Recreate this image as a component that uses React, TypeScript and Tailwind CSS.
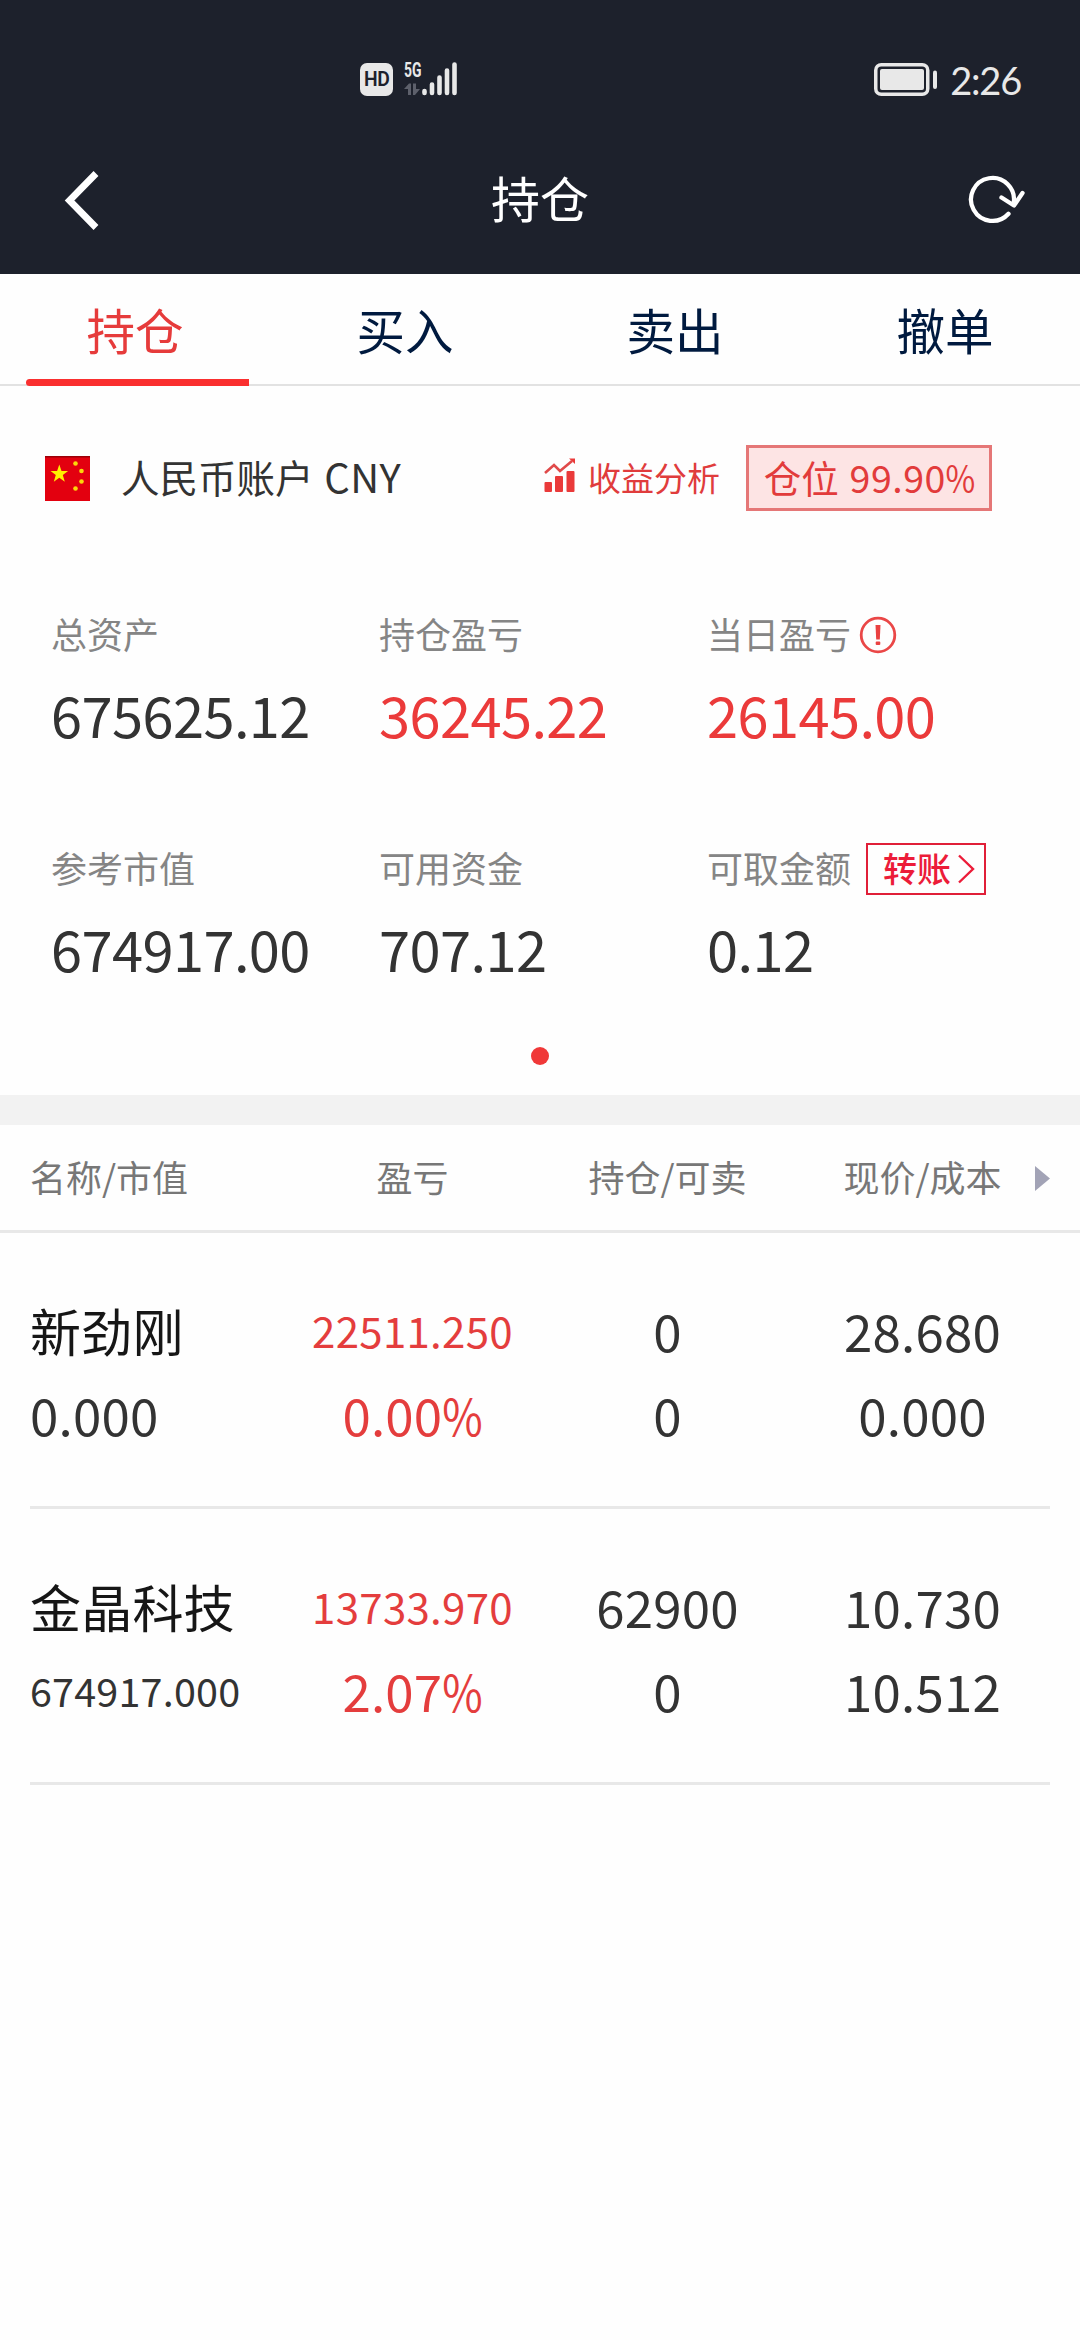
import React from "react";

const rows = [
  { name: "新劲刚", value: "0.000", small: false, pl: "22511.250", pct: "0.00", hold: "0", avail: "0", price: "28.680", cost: "0.000" },
  { name: "金晶科技", value: "674917.000", small: true, pl: "13733.970", pct: "2.07", hold: "62900", avail: "0", price: "10.730", cost: "10.512" },
];

function StatusBar() {
  return (
    <div className="flex h-[126px] items-start pt-[62px] pl-[360px] pr-[59px] text-[#e8e8e8]">
      <div className="mt-[1px] flex h-[33px] w-[33px] items-center justify-center rounded-[7px] bg-[#e8e8e8] font-['Roboto',sans-serif] text-[21px] font-semibold leading-none text-[#1d212c] tracking-[-0.5px]">
        <span className="inline-block scale-x-[0.92]">HD</span>
      </div>
      <svg className="-mt-[10px] ml-[11px] h-[44px] w-[55px]" viewBox="0 -10 55 44">
        <text x="0" y="15" fontFamily="Roboto" fontWeight="700" fontSize="20" textLength="17.500" lengthAdjust="spacingAndGlyphs" fill="#e8e8e8">5G</text>
        <path d="M0 27l5-5.500h2V33H4v-6zM9 21.500h3v5.500h4l-5 6H9z" fill="#5d606b" />
        <g stroke="#e8e8e8" strokeWidth="4.600" strokeLinecap="round">
          <path d="M20.500 29v2M28 22.500v8.500M35.500 15.500V31M43 8.500V31M50.500 2.500V31" />
        </g>
      </svg>
      <svg className="ml-auto mt-[1px] h-[33px] w-[64px]" viewBox="0 0 64 33">
        <rect x="1.750" y="1.750" width="52" height="29.500" rx="5.500" fill="none" stroke="#e8e8e8" strokeWidth="3.500" />
        <rect x="6" y="6" width="44" height="21" rx="2" fill="#e8e8e8" />
        <rect x="59" y="7.500" width="4" height="18.500" rx="2" fill="#e8e8e8" />
      </svg>
      <span className="-mt-[1px] ml-[12px] font-['Lato','Noto_Sans_CJK_SC',sans-serif] text-[38px] leading-[38px] tracking-[-1.2px]">2:26</span>
    </div>
  );
}

function NavBar() {
  return (
    <div className="grid h-[148px] grid-cols-3 items-center pl-[63px] pr-[55px] pb-[1px] text-white">
      <svg className="h-[60px] w-[40px]" viewBox="0 0 40 60" fill="none" stroke="white" strokeWidth="6.800">
        <path d="M33 3.500L6.500 30.500l26.500 27" />
      </svg>
      <h1 className="mb-[5px] pr-[8px] text-center text-[49px] leading-[60px]">持仓</h1>
      <svg className="h-[50px] w-[57px] justify-self-end" viewBox="0 0 57 50" fill="none" stroke="white" strokeWidth="4.300" strokeLinecap="round" strokeLinejoin="round">
        <path d="M40.500 38.800A21.500 21.500 0 1 1 45.700 28" />
        <path d="M33.500 22.500L46 30.500l8.500-12.500" />
      </svg>
    </div>
  );
}

function Tabs() {
  return (
    <div className="relative grid h-[112px] grid-cols-4 border-b-[2px] border-[#e2e2e2] text-center text-[48.500px] leading-[110px] text-[#001a3f]">
      <span className="text-[#e63b3b]">持仓</span>
      <span>买入</span>
      <span>卖出</span>
      <span>撤单</span>
      <div className="absolute -bottom-[2px] left-[26px] h-[7px] w-[223px] rounded-l-full bg-[#fa2f2f]" />
    </div>
  );
}

function Flag() {
  return (
    <svg className="h-[45px] w-[45px]" viewBox="0 0 45 45">
      <rect width="45" height="45" fill="#e3000f" />
      <rect width="45" height="1.500" fill="#9c0008" />
      <path d="M14.300 8.500l2.200 6.400h6.600l-5.300 4.100 2 6.800-5.500-4-5.500 4 2-6.800-5.300-4.100h6.600z" fill="#fff000" />
      <g fill="#fbd80a">
        <circle cx="30.500" cy="7.500" r="2.300" />
        <circle cx="36.500" cy="15" r="2.300" />
        <circle cx="36.500" cy="25.500" r="2.300" />
        <circle cx="30.500" cy="32.500" r="2.300" />
      </g>
    </svg>
  );
}

function Stat({ label, value, red, children }: { label: string; value: string; red?: boolean; children?: React.ReactNode }) {
  return (
    <div className="h-[234px]">
      <div className="flex h-[54px] items-center whitespace-nowrap text-[36px] leading-[50px] text-[#858585]">
        <span className="mb-[4px]">{label}</span>
        {children}
      </div>
      <div className={`mt-[11px] text-[56px] leading-[82px] tracking-[-0.6px] ${red ? "text-[#eb3a3a]" : "text-[#333]"}`}>{value}</div>
    </div>
  );
}

function Summary() {
  return (
    <section className="h-[709px]">
      <div className="flex h-[186px] items-center pl-[45px] pb-[2px]">
        <Flag />
        <span className="mb-[4px] ml-[31px] w-[423px] whitespace-nowrap text-[38.500px] leading-[50px] text-[#333]">
          人民币账户 <span className="ml-[2px] text-[40px] leading-none tracking-[0.5px]">CNY</span>
        </span>
        <svg className="mb-[6px] h-[36px] w-[32px]" viewBox="0 0 32 36" fill="#ea3a3a">
          <rect x="0.500" y="25" width="7.500" height="10" rx="1" />
          <rect x="11" y="19" width="8" height="16" rx="1" />
          <rect x="22.500" y="14" width="8" height="21" rx="1" />
          <path d="M1 16l9-8 6 6L28 4" fill="none" stroke="#e04a4a" strokeWidth="2.600" />
          <path d="M25 1.500h6v5.500z" />
        </svg>
        <span className="mb-[3px] ml-[12px] text-[33px] leading-[50px] text-[#e03c3c]">收益分析</span>
        <div className="ml-[26px] flex h-[66px] w-[246px] items-center justify-center whitespace-pre border-[3px] border-[#e57777] bg-[#fde4e4] pb-[3px] text-[37.500px] leading-[57px] text-[#e23b3b]">
          仓位<span className="ml-[2px] tracking-[0.5px]"> 99.90</span>
          <span className="-mx-[3px] inline-block scale-x-[0.86]">%</span>
        </div>
      </div>
      <div className="grid grid-cols-[328px_328px_328px] pl-[51px] pt-[36px]">
        <Stat label="总资产" value="675625.12" />
        <Stat label="持仓盈亏" value="36245.22" red />
        <Stat label="当日盈亏" value="26145.00" red>
          <svg className="ml-[8px] h-[38px] w-[38px]" viewBox="0 0 38 38">
            <circle cx="19" cy="19" r="16.800" fill="none" stroke="#ea4747" strokeWidth="2.800" />
            <path d="M16.500 9h5l-.7 14.500h-3.600z" fill="#ea4141" />
            <rect x="16.700" y="25.500" width="4.600" height="3.500" rx="1" fill="#ea4141" />
          </svg>
        </Stat>
        <Stat label="参考市值" value="674917.00" />
        <Stat label="可用资金" value="707.12" />
        <Stat label="可取金额" value="0.12">
          <span className="ml-[15px] flex h-[52px] w-[120px] items-center border-[2px] border-[#e01f38] pl-[15px] text-[34px] font-medium leading-[44px] text-[#ec1c39]">
            <span className="mb-[2px]">转账</span>
            <svg className="ml-[6px] h-[30px] w-[18px]" viewBox="0 0 18 30" fill="none" stroke="#ec1c39" strokeWidth="2.400">
              <path d="M2 1.500L16 15 2 28.500" />
            </svg>
          </span>
        </Stat>
      </div>
      <div className="mx-auto -mt-[29px] h-[18px] w-[18px] rounded-full bg-[#f03838]" />
    </section>
  );
}

export default function App() {
  return (
    <div className="h-[2340px] w-[1080px] overflow-hidden bg-[#fefefe] font-['Noto_Sans_CJK_SC',sans-serif]">
      <header className="bg-[#1d212c]">
        <StatusBar />
        <NavBar />
      </header>
      <Tabs />
      <Summary />
      <div className="h-[30px] bg-[#f2f2f2]" />
      <div className="relative grid h-[108px] grid-cols-4 border-b-[3px] border-[#e8e8e8] px-[30px] text-center text-[36px] leading-[102px] text-[#777]">
        <span className="text-left">名称/市值</span>
        <span>盈亏</span>
        <span>持仓/可卖</span>
        <span>现价/成本</span>
        <svg className="absolute right-[30px] top-[41px] h-[25px] w-[15px]" viewBox="0 0 15 25">
          <path d="M0 0l15 12.500L0 25z" fill="#a2a3b6" />
        </svg>
      </div>
      {rows.map((r) => (
        <div key={r.name} className="mx-[30px] grid h-[276px] grid-cols-4 border-b-[3px] border-[#e8e8e8] pt-[55px] text-center text-[51px] leading-[84px] tracking-[0.2px] text-[#333]">
          <div className="whitespace-nowrap text-left">
            <div className="text-[#161616]">{r.name}</div>
            <div className={r.small ? "text-[39.500px]" : ""}>{r.value}</div>
          </div>
          <div className="text-[#e43d3d]">
            <div className="text-[42px] tracking-[0.3px]">{r.pl}</div>
            <div>
              {r.pct}
              <span className="-mx-[3.500px] inline-block scale-x-[0.86]">%</span>
            </div>
          </div>
          <div>
            <div>{r.hold}</div>
            <div>{r.avail}</div>
          </div>
          <div>
            <div>{r.price}</div>
            <div>{r.cost}</div>
          </div>
        </div>
      ))}
    </div>
  );
}
